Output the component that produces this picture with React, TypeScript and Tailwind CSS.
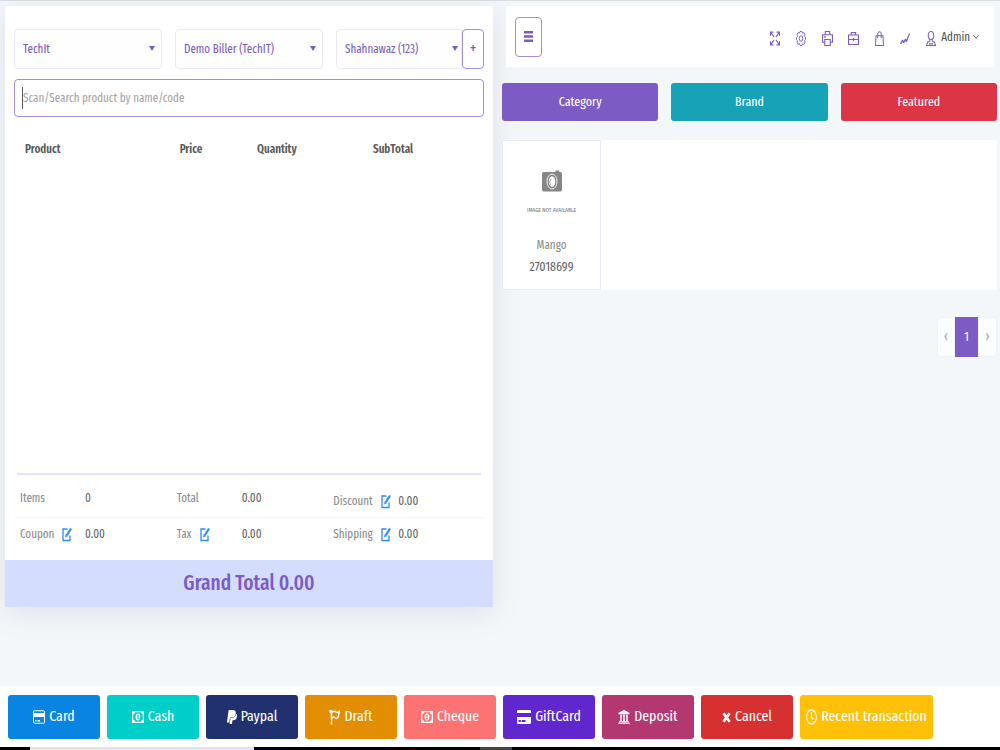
import React from "react";
import type { ReactNode } from "react";
import { FaPaypal, FaUniversity, FaRegClock, FaCreditCard } from "react-icons/fa";

const strokeProps = {
  fill: "none",
  stroke: "currentColor",
  preserveAspectRatio: "none",
  "aria-hidden": true,
} as const;

function ExpandIcon() {
  return (
    <svg viewBox="0 0 20 28" strokeWidth="2.2" className="h-[15px] w-2.5" {...strokeProps}>
      <path d="M1 9V2h6M1 2l7 9M13 2h6v7M19 2l-7 9M1 19v7h6M1 26l7-9M13 26h6v-7M19 26l-7-9" />
    </svg>
  );
}

function GearIcon() {
  return (
    <svg viewBox="0 0 20 28" strokeWidth="1.8" className="h-[15px] w-2.5" {...strokeProps}>
      <path d="M8 1h4l1 3 3-1 2 4-1 3 2 2v4l-2 2 1 3-2 4-3-1-1 3H8l-1-3-3 1-2-4 1-3-2-2v-4l2-2-1-3 2-4 3 1z" />
      <ellipse cx="10" cy="14" rx="3.5" ry="5" />
    </svg>
  );
}

function PrintIcon() {
  return (
    <svg viewBox="0 0 20 28" strokeWidth="2" className="h-[15px] w-[11px] shrink-0" {...strokeProps}>
      <path d="M6 7V1h8v6M5 21H1V7h18v14h-4M5 16h10v11H5zM3.5 11h4" />
    </svg>
  );
}

function BriefcaseIcon() {
  return (
    <svg viewBox="0 0 20 26" strokeWidth="2" className="h-[13px] w-[11px] shrink-0" {...strokeProps}>
      <path d="M1 6h18v19H1zM6 6V1h8v5M1 15h18M10 12v6" />
    </svg>
  );
}

function BagIcon() {
  return (
    <svg viewBox="0 0 18 28" strokeWidth="2" className="h-[15px] w-[9px]" {...strokeProps}>
      <path d="M2 9h14l1 18H1zM5.500 13V5c0-5 7-5 7 0v8" />
    </svg>
  );
}

function TrendIcon() {
  return (
    <svg viewBox="0 0 20 24" strokeWidth="2.4" className="h-3 w-2.5" {...strokeProps}>
      <path d="M1 22l4-8 2 5 4-7 2 5 6-16" strokeLinejoin="bevel" />
      <path d="M1 22l4-5 2 3 4-5 2 3" strokeWidth="1.5" />
    </svg>
  );
}

function UserIcon() {
  return (
    <svg viewBox="0 0 20 28" strokeWidth="2" className="h-[15px] w-2.5" {...strokeProps}>
      <ellipse cx="10" cy="8.500" rx="5.500" ry="7.500" />
      <path d="M7.500 15v4L3 21l-2 6h18l-2-6-4.500-2v-4M6 24h8" />
    </svg>
  );
}

function EditIcon() {
  return (
    <svg viewBox="0 0 20 30" className="h-[15px] w-2.5" {...strokeProps}>
      <path d="M11 4H2v23h14V17" strokeWidth="2.600" />
      <path d="M18 3L10 16" strokeWidth="4.500" />
      <path d="M6 21l1.500-7 5 4z" fill="currentColor" stroke="none" />
    </svg>
  );
}

function MoneyIcon() {
  return (
    <svg viewBox="0 0 24 24" className="h-3 w-3 shrink-0" preserveAspectRatio="none" aria-hidden="true">
      <path
        fill="currentColor"
        fillRule="evenodd"
        d="M0 0h24v24H0zM6 2.500a4 4 0 0 1-3.500 4v11a4 4 0 0 1 3.500 4h12a4 4 0 0 1 3.500-4v-11a4 4 0 0 1-3.500-4zM12 5c6.500 0 6.500 14 0 14S5.500 5 12 5zM10 9v1.500h1.200V15H10v1.500h4.500V15h-1.200V7.500H12z"
      />
    </svg>
  );
}

function CardIcon() {
  return (
    <svg viewBox="0 0 24 28" className="h-3.5 w-3 shrink-0" preserveAspectRatio="none" aria-hidden="true">
      <rect x="1" y="1.500" width="22" height="25" rx="2" fill="none" stroke="currentColor" strokeWidth="2" />
      <path d="M1 6h22v8H1zM4 20h3v3H4zM9 20h5v3H9z" fill="currentColor" />
    </svg>
  );
}

function FlagIcon() {
  return (
    <svg viewBox="0 0 22 32" strokeWidth="2.800" className="h-4 w-[11px] shrink-0" {...strokeProps}>
      <path d="M5 4v27M5 8c4-5 7-4 9-2s4 1 7-2l-3 13c-3 3-5 2-7 0s-4-1-6 2" />
      <circle cx="3.500" cy="5" r="2" />
    </svg>
  );
}

function CrossIcon() {
  return (
    <svg viewBox="0 0 18 22" className="h-[11px] w-[9px] shrink-0" preserveAspectRatio="none" aria-hidden="true">
      <path d="M3 2.500l12 17M15 2.500l-12 17" stroke="currentColor" strokeWidth="5.500" fill="none" />
    </svg>
  );
}

function CameraIcon() {
  return (
    <svg viewBox="0 0 40 44" className="h-[22px] w-5" preserveAspectRatio="none" aria-hidden="true">
      <path d="M3 4h23l2-3h6l1 3h2q3 0 3 4v31q0 4-3 4H3q-3 0-3-4V8q0-4 3-4z" fill="#868686" />
      <ellipse cx="20" cy="23" rx="10" ry="15" fill="none" stroke="#fff" strokeWidth="1.800" />
      <ellipse cx="20" cy="23" rx="6.500" ry="10.500" fill="#fff" />
      <path d="M17 30q-4-7 1-13" fill="none" stroke="#868686" strokeWidth="1.500" />
    </svg>
  );
}

function SelectBox({ label, value, addon = false }: { label: string; value: string; addon?: boolean }) {
  return (
    <div className="relative flex min-w-0">
      <select
        aria-label={label}
        className={`h-10 min-w-0 flex-1 appearance-none border border-[#ebe9fb] bg-[#fefefe] pl-2 text-[#7c5cc4] outline-none ${addon ? "rounded-l" : "rounded"}`}
      >
        <option>{value}</option>
      </select>
      <svg
        viewBox="0 0 6 5"
        aria-hidden="true"
        className={`pointer-events-none absolute top-[17px] h-[5px] w-1.5 text-[#7c5cc4] ${addon ? "right-[26px]" : "right-[7px]"}`}
      >
        <path d="M0 0h6L3 5z" fill="currentColor" />
      </svg>
      {addon && (
        <button aria-label="Add customer" className="h-10 w-[22px] rounded border border-[#a48cd6] bg-white text-base text-[#7c5cc4]">
          +
        </button>
      )}
    </div>
  );
}

function Total({ label, value, editable = false }: { label: string; value: string; editable?: boolean }) {
  return (
    <div className={`flex items-center pl-1.5 ${editable ? "h-[23px]" : "h-[18px]"}`}>
      <dt className="flex w-[65px] items-center gap-2 text-[#8b8b8b]">
        {label}
        {editable && (
          <button aria-label={`Edit ${label}`} className="pt-0.5 text-[#2f8bf7]">
            <EditIcon />
          </button>
        )}
      </dt>
      <dd className="text-[#666]">{value}</dd>
    </div>
  );
}

function PayButton({ tone, icon, children, wide = false }: { tone: string; icon: ReactNode; children: ReactNode; wide?: boolean }) {
  return (
    <button
      className={`flex h-11 items-center justify-center gap-1 whitespace-nowrap rounded-[3px] text-[15px] text-white ${wide ? "w-[133px]" : "w-[92px]"} ${tone}`}
    >
      {icon}
      {children}
    </button>
  );
}

const tools = [
  { name: "Full screen", icon: <ExpandIcon /> },
  { name: "Settings", icon: <GearIcon /> },
  { name: "Print", icon: <PrintIcon /> },
  { name: "Register", icon: <BriefcaseIcon /> },
  { name: "Sales", icon: <BagIcon /> },
  { name: "Profit", icon: <TrendIcon /> },
];

export default function App() {
  return (
    <div className="flex min-h-screen flex-col border-t border-[#dadfe3] bg-[#f4f7fa] font-['Fira_Sans_Extra_Condensed','Barlow_Condensed','Roboto_Condensed','Lato',sans-serif] text-xs">
      <main className="flex flex-1 items-start pt-[5px]">
        <div className="w-1/2 pl-[5px] pr-[7px]">
          <section className="rounded-t bg-white shadow-[0_5px_30px_rgba(80,100,110,0.14)]">
            <div className="px-[9px] pt-[23px]">
              <div className="grid grid-cols-3 gap-[13px]">
                <SelectBox label="Warehouse" value="TechIt" />
                <SelectBox label="Biller" value="Demo Biller (TechIT)" />
                <SelectBox label="Customer" value="Shahnawaz (123)" addon />
              </div>
              <div className="relative mt-2.5">
                <input
                  type="text"
                  aria-label="Search product"
                  placeholder="Scan/Search product by name/code"
                  className="block h-[38px] w-full rounded border border-[#a48cd6] bg-white px-2 text-[#555] outline-none placeholder:text-[#a5a5a5]"
                />
                <span className="pointer-events-none absolute left-2 top-2 h-[22px] w-px bg-[#555]" />
              </div>
              <div className="mx-[3px] min-h-[358px] border-b-2 border-[#e3e2fa] pt-6">
                <table className="w-full table-fixed text-left text-[#5b5b5b]">
                  <thead>
                    <tr>
                      <th className="w-1/3 pl-2 font-semibold">Product</th>
                      <th className="w-1/6 pl-2 font-semibold">Price</th>
                      <th className="w-1/4 pl-2 font-semibold">Quantity</th>
                      <th className="w-1/4 pl-2 font-semibold">SubTotal</th>
                    </tr>
                  </thead>
                </table>
              </div>
              <dl className="pb-[11px]">
                <div className="grid h-[43px] grid-cols-3 items-start border-b border-[#f6f6f8] pt-3.5">
                  <Total label="Items" value="0" />
                  <Total label="Total" value="0.00" />
                  <Total label="Discount" value="0.00" editable />
                </div>
                <div className="grid h-[31px] grid-cols-3 items-start pt-1">
                  <Total label="Coupon" value="0.00" editable />
                  <Total label="Tax" value="0.00" editable />
                  <Total label="Shipping" value="0.00" editable />
                </div>
              </dl>
            </div>
            <h2 className="bg-[#d5ddff] text-center text-[21px] font-medium leading-[47px] text-[#7c5cc4]">Grand Total 0.00</h2>
          </section>
        </div>

        <div className="w-1/2 pl-0.5 pr-[3px]">
          <header className="ml-1 mr-[3px] flex h-[61px] items-center bg-white pl-[9px] pr-[15px] text-[#7c5cc4]">
            <button aria-label="Menu" className="flex h-10 w-[27px] items-center justify-center rounded border border-[#a48cd6]">
              <svg viewBox="0 0 9 11" className="h-[11px] w-[9px]" aria-hidden="true">
                <path d="M0 0h9v2.500H0zM0 4.300h9v2.500H0zM0 8.500h9V11H0z" fill="currentColor" />
              </svg>
            </button>
            <nav className="ml-auto flex items-center gap-4 pt-1">
              {tools.map((tool) => (
                <a key={tool.name} href="#" aria-label={tool.name} className="flex w-2.5 justify-center">
                  {tool.icon}
                </a>
              ))}
              <a href="#" className="flex items-center gap-[5px]">
                <UserIcon />
                <span className="pb-1 text-[#555]">Admin</span>
                <svg viewBox="0 0 6 6" className="-ml-0.5 mb-1 size-1.5" fill="none" stroke="currentColor" aria-hidden="true">
                  <path d="M.5 1l2.500 3.500L5.500 1" />
                </svg>
              </a>
            </nav>
          </header>

          <div className="mt-4 grid grid-cols-3 gap-[13px] text-[13px] text-white">
            <button className="h-[38px] rounded-[3px] bg-[#7c5cc4]">Category</button>
            <button className="h-[38px] rounded-[3px] bg-[#17a2b8]">Brand</button>
            <button className="h-[38px] rounded-[3px] bg-[#dc3545]">Featured</button>
          </div>

          <div className="mt-[19px] bg-white">
            <button className="flex w-1/5 flex-col items-center border border-[#ebe9fb] pb-3 pt-[29px]">
              <CameraIcon />
              <span className="mt-3.5 whitespace-nowrap text-[6px] leading-2 text-[#777]">IMAGE NOT AVAILABLE</span>
              <span className="mt-[21px] leading-[21px] text-[#8b8b8b]">Mango</span>
              <span className="text-[13px] leading-[21px] text-[#666]">27018699</span>
            </button>
          </div>

          <nav aria-label="Pages" className="mt-[27px] flex justify-end text-[#aaa]">
            <button aria-label="Previous page" className="h-10 w-[18px] rounded-l border border-[#eff1f4] bg-[#fcfdfe] text-[15px]">
              ‹
            </button>
            <button className="h-10 w-[23px] bg-[#7c5cc4] text-[13px] text-white">1</button>
            <button aria-label="Next page" className="h-10 w-[19px] rounded-r border border-[#eff1f4] bg-[#fcfdfe] text-[15px]">
              ›
            </button>
          </nav>
        </div>
      </main>

      <footer className="bg-white">
        <div className="flex flex-wrap gap-[7px] px-2 pb-2 pt-[9px]">
          <PayButton tone="bg-[#0984e3]" icon={<CardIcon />}>Card</PayButton>
          <PayButton tone="bg-[#00cec9]" icon={<MoneyIcon />}>Cash</PayButton>
          <PayButton tone="bg-[#213170]" icon={<FaPaypal className="h-4 w-2.5 shrink-0" preserveAspectRatio="none" />}>Paypal</PayButton>
          <PayButton tone="bg-[#e28d02]" icon={<FlagIcon />}>Draft</PayButton>
          <PayButton tone="bg-[#fd7272]" icon={<MoneyIcon />}>Cheque</PayButton>
          <PayButton tone="bg-[#5f27cd]" icon={<FaCreditCard className="h-4 w-3.5 shrink-0" preserveAspectRatio="none" />}>GiftCard</PayButton>
          <PayButton tone="bg-[#b33771]" icon={<FaUniversity className="h-4 w-3 shrink-0" preserveAspectRatio="none" />}>Deposit</PayButton>
          <PayButton tone="bg-[#d63031]" icon={<CrossIcon />}>Cancel</PayButton>
          <PayButton tone="bg-[#ffc107]" icon={<FaRegClock className="h-4 w-[11px] shrink-0" preserveAspectRatio="none" />} wide>Recent transaction</PayButton>
        </div>
        <div className="flex h-[3px] bg-black">
          <div className="ml-[3%] w-[22.4%] bg-[#e6e6e6]" />
          <div className="ml-[22.6%] w-[3.2%] bg-[#444]" />
        </div>
      </footer>
    </div>
  );
}
